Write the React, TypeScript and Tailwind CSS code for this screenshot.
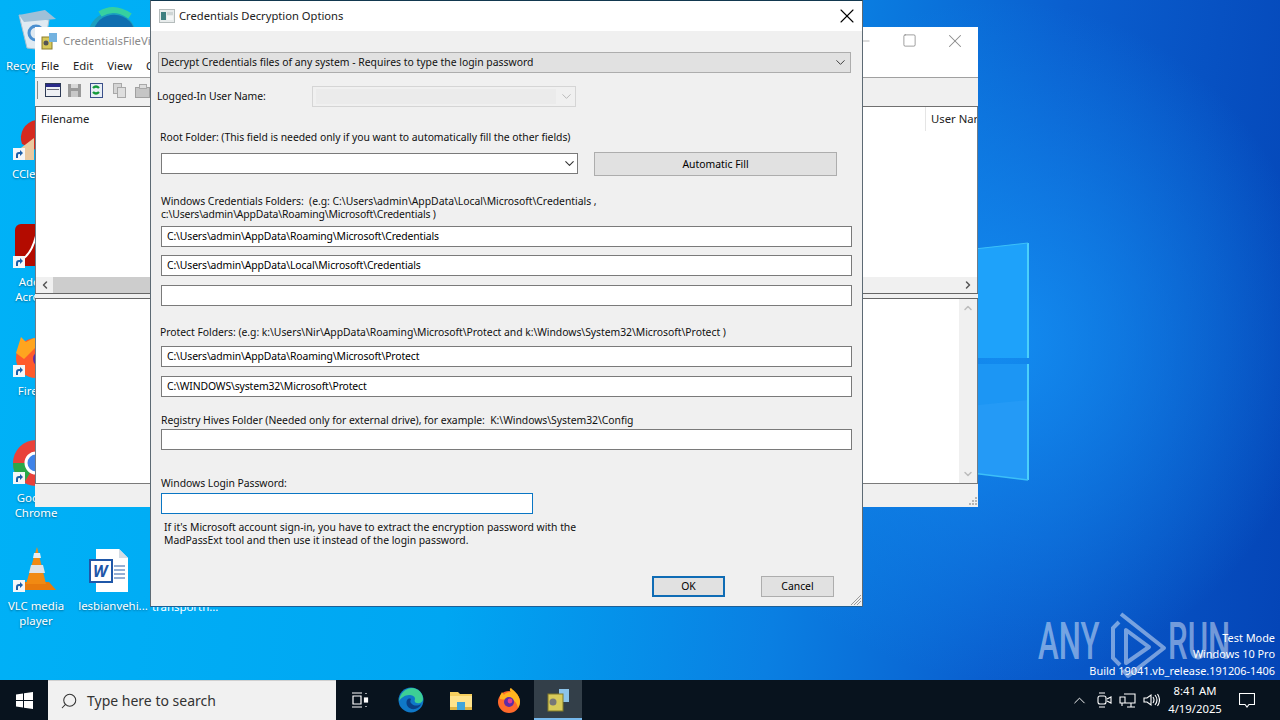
import { ChevronDown, ChevronLeft, ChevronRight, ChevronUp, X, Minus, Square, Search } from "lucide-react";

function TextBox({ value, className = "" }: { value?: string; className?: string }) {
  return (
    <div className={`ml-[10px] flex h-[21px] w-[691px] shrink-0 items-center border border-[#7a7a7a] bg-white pl-[5px] tracking-[-0.13px] text-black ${className}`}>
      {value}
    </div>
  );
}

function Label({ text, className = "" }: { text: string; className?: string }) {
  return <div className={`h-[14px] whitespace-pre leading-[14px] tracking-[-0.04px] ${className}`}>{text}</div>;
}

function Dialog() {
  return (
    <div className="absolute left-[150px] top-0 h-[607px] w-[713px] border border-[#5d6a74] border-t-[#12384f] border-b-[#1d5f96] bg-[#f0f0f0] text-[10.4px] text-[#111]">
      <div className="flex h-[30px] items-center bg-white pl-[8px] pr-[3px]">
        <svg width="16" height="14" viewBox="0 0 16 14" className="mr-[4px]">
          <rect x="0.5" y="0.5" width="15" height="13" fill="#e8ecec" stroke="#b5bcbc" />
          <rect x="2" y="3" width="5" height="8" fill="#3d7f80" />
          <rect x="8" y="3" width="6" height="3" fill="#cfd6d6" />
          <rect x="8" y="7" width="6" height="4" fill="#f4f6f6" />
        </svg>
        <span className="text-[11.2px] text-[#222]">Credentials Decryption Options</span>
        <X size={24} strokeWidth={1.1} className="ml-auto text-black" />
      </div>
      <div className="flex flex-col">
        <div className="ml-[7px] mt-[21px] flex h-[21px] w-[693px] items-center justify-between border border-[#adadad] bg-[#e1e1e1] pl-[2px] pr-[2px]">
          <span>Decrypt Credentials files of any system - Requires to type the login password</span>
          <ChevronDown size={15} strokeWidth={1.5} className="text-[#333]" />
        </div>

        <div className="mt-[13px] flex h-[21px]">
          <div className="ml-[6px] flex w-[155px] items-center pt-[1px] tracking-[-0.08px]">Logged-In User Name:</div>
          <div className="flex w-[264px] items-center justify-end border border-[#d5d5d5] bg-[#f0f0f0] pr-[1px]">
            <div className="mr-[3px] h-[15px] w-[240px] bg-[#ebebeb]" />
            <ChevronDown size={15} strokeWidth={1.5} className="text-[#b5b5b5]" />
          </div>
        </div>

        <Label className="ml-[9px] mt-[23px]" text="Root Folder: (This field is needed only if you want to automatically fill the other fields)" />

        <div className="mt-[8px] flex items-start">
          <div className="ml-[10px] mt-[1px] flex h-[21px] w-[417px] items-center justify-end border border-[#7a7a7a] bg-white">
            <ChevronDown size={15} strokeWidth={1.7} className="text-[#333]" />
          </div>
          <div className="ml-[16px] flex h-[24px] w-[243px] items-center justify-center border border-[#adadad] bg-[#e1e1e1] pt-[1px] text-black">
            Automatic Fill
          </div>
        </div>

        <div className="ml-[10px] mt-[19px] whitespace-pre leading-[13px] tracking-[-0.03px]">
          {"Windows Credentials Folders:  (e.g: C:\\Users\\admin\\AppData\\Local\\Microsoft\\Credentials ,\n"}
          <span className="tracking-[-0.15px]">{"c:\\Users\\admin\\AppData\\Roaming\\Microsoft\\Credentials )"}</span>
        </div>
        <TextBox className="mt-[5px]" value="C:\Users\admin\AppData\Roaming\Microsoft\Credentials" />
        <TextBox className="mt-[8px]" value="C:\Users\admin\AppData\Local\Microsoft\Credentials" />
        <TextBox className="mt-[9px]" />

        <Label className="ml-[9px] mt-[19px]" text="Protect Folders: (e.g: k:\Users\Nir\AppData\Roaming\Microsoft\Protect and k:\Windows\System32\Microsoft\Protect )" />
        <TextBox className="mt-[7px]" value="C:\Users\admin\AppData\Roaming\Microsoft\Protect" />
        <TextBox className="mt-[9px]" value="C:\WINDOWS\system32\Microsoft\Protect" />

        <Label className="ml-[10px] mt-[16px]" text="Registry Hives Folder (Needed only for external drive), for example:  K:\Windows\System32\Config" />
        <TextBox className="mt-[2px]" />

        <Label className="ml-[10px] mt-[26px]" text="Windows Login Password:" />
        <div className="ml-[10px] mt-[3px] h-[21px] w-[372px] border border-[#0a76c4] bg-white" />
        <div className="ml-[13px] mt-[7px] whitespace-pre leading-[13px] tracking-[-0.02px]">
          {"If it's Microsoft account sign-in, you have to extract the encryption password with the\nMadPassExt tool and then use it instead of the login password."}
        </div>

        <div className="mt-[29px] flex justify-end gap-[36px] pr-[28px]">
          <div className="flex h-[21px] w-[73px] items-center justify-center border-2 border-[#0f6cb5] bg-[#e1e1e1] text-black">OK</div>
          <div className="flex h-[21px] w-[73px] items-center justify-center border border-[#adadad] bg-[#e1e1e1] pt-[1px] text-black">Cancel</div>
        </div>
      </div>
      <svg width="12" height="12" viewBox="0 0 12 12" className="absolute bottom-0 right-0">
        <path d="M11 1 1 11M11 4 4 11M11 7 7 11" stroke="#9a9a9a" strokeWidth="1" fill="none" />
      </svg>
    </div>
  );
}

function ToolbarIcons() {
  return (
    <div className="flex h-[24px] items-center pl-[2px]">
      <div className="h-[18px] w-px bg-[#8a8a8a]" />
      <svg width="120" height="16" viewBox="0 0 120 16" className="ml-[6px]">
        <rect x="1.5" y="1.5" width="15" height="13" fill="#eef0f4" stroke="#2d3a55" />
        <rect x="2" y="2" width="14" height="3" fill="#2a2a8a" />
        <rect x="3" y="7" width="12" height="1" fill="#6a6a7a" />
        <rect x="24" y="2" width="13" height="13" fill="#9a9a9a" />
        <rect x="27" y="2" width="7" height="4" fill="#d8d8d8" />
        <rect x="27" y="9" width="7" height="6" fill="#c8c8c8" />
        <rect x="46.5" y="1.5" width="12" height="14" fill="#e8eef5" stroke="#3a4f8a" />
        <path d="M49 6q3-3 6 0M55 10q-3 3-6 0" stroke="#129a3a" strokeWidth="2.4" fill="none" />
        <rect x="69.5" y="1.5" width="8" height="10" fill="#d5d5d5" stroke="#a8a8a8" />
        <rect x="73.5" y="5.5" width="8" height="10" fill="#dedede" stroke="#a8a8a8" />
        <rect x="91.5" y="5.5" width="14" height="10" fill="#c5c5c5" stroke="#a0a0a0" />
        <rect x="95.5" y="2.5" width="7" height="4" fill="#dcdcdc" stroke="#a8a8a8" />
      </svg>
    </div>
  );
}

function BackWindow() {
  return (
    <div className="absolute left-[35px] top-[27px] flex h-[480px] w-[943px] flex-col bg-[#f0f0f0] text-[11.3px] text-[#222]">
      <div className="flex h-[28px] items-center bg-white pl-[5px]">
        <svg width="18" height="18" viewBox="0 0 18 18" className="mr-[5px]">
          <rect x="2" y="5" width="10" height="12" fill="#d8c95a" stroke="#8b7f2c" />
          <circle cx="6" cy="11" r="2.5" fill="#555" />
          <rect x="9" y="1" width="8" height="9" fill="#74b3e0" />
        </svg>
        <span className="text-[#8a8a8a]">CredentialsFileView</span>
        <Minus size={14} strokeWidth={1} className="absolute left-[823px] top-[7px] text-[#888]" />
        <Square size={15} strokeWidth={1} className="absolute left-[867px] top-[6px] text-[#666]" />
        <X size={22} strokeWidth={1.1} className="absolute left-[909px] top-[3px] text-[#8a8a8a]" />
      </div>
      <div className="flex h-[22px] items-center gap-[14px] bg-white pl-[6px]">
        <span>File</span>
        <span>Edit</span>
        <span>View</span>
        <span>Options</span>
        <span>Help</span>
      </div>
      <div className="h-[30px] border-y border-y-[#a0a0a0] border-b-[#707070] bg-[#f0f0f0]">
        <ToolbarIcons />
      </div>
      <div className="flex h-[170px] overflow-hidden border-x border-x-[#6f7c88] bg-white">
        <div className="flex h-[24px] w-full items-center justify-between pl-[5px]">
          <span>Filename</span>
          <div className="flex h-full w-[52px] items-center overflow-hidden whitespace-nowrap border-l border-l-[#e5e5e5] pl-[5px]">User Nar</div>
        </div>
      </div>
      <div className="flex h-[16px] items-center border-x border-x-[#6f7c88] bg-[#f0f0f0]">
        <ChevronLeft size={12} strokeWidth={3} className="ml-[3px] text-[#555]" />
        <div className="ml-[2px] h-full w-[750px] bg-[#cdcdcd]" />
        <ChevronRight size={12} strokeWidth={3} className="ml-auto mr-[3px] text-[#555]" />
      </div>
      <div className="h-[6px] border-y border-y-[#666] bg-[#f0f0f0]" />
      <div className="flex h-[184px] justify-end border-x border-x-[#6f7c88] bg-white">
        <div className="flex w-[18px] flex-col items-center justify-between bg-[#f0f0f0] py-[3px]">
          <ChevronUp size={12} strokeWidth={3} className="text-[#bdbdbd]" />
          <ChevronDown size={12} strokeWidth={3} className="text-[#bdbdbd]" />
        </div>
      </div>
      <div className="relative flex-1 border-t border-t-[#7a7a7a] bg-[#f0f0f0]">
        <svg width="9" height="9" viewBox="0 0 9 9" className="absolute bottom-[2px] right-[1px]">
          <path d="M7 1h2v2H7zM4 4h2v2H4zM7 4h2v2H7zM1 7h2v2H1zM4 7h2v2H4zM7 7h2v2H7z" fill="#b5b5b5" />
        </svg>
      </div>
    </div>
  );
}

function ShortcutArrow() {
  return (
    <svg width="12" height="12" viewBox="0 0 12 12" className="absolute bottom-0 left-0">
      <rect width="12" height="12" fill="#f4f6f8" />
      <path d="M3 10V7q0-3 3-3h1V2l3 3-3 3V6H6q-1 0-1 1v3z" fill="#1d5fa8" />
    </svg>
  );
}

function DesktopIcon({ left, top, lines, art, shortcut = false }: { left: number; top: number; lines: string[]; art: React.ReactNode; shortcut?: boolean }) {
  return (
    <div className="absolute flex w-[76px] flex-col items-center text-center text-[11.4px] leading-[15px] text-white" style={{ left, top }}>
      <div className="relative h-[48px] w-[48px]">
        {art}
        {shortcut && <div className="absolute bottom-[2px] left-[1px] h-[12px] w-[12px]"><ShortcutArrow /></div>}
      </div>
      <div className="mt-[4px] whitespace-nowrap [text-shadow:0_1px_2px_#0006]">
        {lines.map((l) => (
          <div key={l}>{l}</div>
        ))}
      </div>
    </div>
  );
}

function Wallpaper() {
  return (
    <svg width="180" height="260" viewBox="0 0 180 260" className="absolute left-[850px] top-[232px]">
      <path d="M0 31 178 11V126H0Z" fill="#1ea2fa" />
      <path d="M0 132H178V248L0 226Z" fill="#1c96f4" />
      <path d="M0 186 178 168V248L0 226Z" fill="#2a9cf6" fillOpacity="0.6" />
      <path d="M178 11V126" stroke="#4bd0fa" strokeWidth="2" />
      <path d="M178 132V248" stroke="#4bd0fa" strokeWidth="2" />
      <path d="M0 31 178 11" stroke="#3cc0f8" strokeWidth="1" />
      <path d="M0 226 178 248" stroke="#3cc0f8" strokeWidth="1.5" />
    </svg>
  );
}

function Watermark() {
  return (
    <div className="absolute left-0 top-0 h-[680px] w-[1280px] overflow-hidden text-white/45">
      <span className="absolute left-[1038px] top-[612px] origin-left scale-x-[0.6] font-['Roboto',sans-serif] text-[52px] font-medium leading-[60px]">ANY</span>
      <span className="absolute left-[1168px] top-[612px] origin-left scale-x-[0.6] font-['Roboto',sans-serif] text-[52px] font-medium leading-[60px]">RUN</span>
      <svg width="62" height="72" viewBox="0 0 62 72" className="absolute left-[1106px] top-[608px]">
        <path d="M15 6 58 40 22 68 17 62" fill="none" stroke="currentColor" strokeWidth="4" strokeLinejoin="round" />
        <path d="M20 22V55L43 39Z" fill="none" stroke="currentColor" strokeWidth="4" strokeLinejoin="round" />
        <path d="M13 14 7 20V50L14 57" fill="none" stroke="currentColor" strokeWidth="4" />
      </svg>
      <div className="absolute right-[5px] top-[630px] text-right text-[10.9px] leading-[16px] text-white">
        <div>Test Mode</div>
        <div>Windows 10 Pro</div>
        <div className="mt-[1px]">Build 19041.vb_release.191206-1406</div>
      </div>
    </div>
  );
}

function Taskbar() {
  return (
    <div className="absolute bottom-0 left-0 flex h-[40px] w-[1280px] items-center bg-[#08131e] text-white">
      <div className="flex h-full w-[48px] items-center justify-center">
        <svg width="17" height="17" viewBox="0 0 17 17">
          <path d="M0 2.4 7 1.4V8H0ZM8 1.3 17 0V8H8ZM0 9H7V15.6L0 14.6ZM8 9H17V17L8 15.7Z" fill="#fff" />
        </svg>
      </div>
      <div className="flex h-full w-[288px] items-center border-t border-t-[#d0d0d0] bg-[#f1f1f1] pl-[12px] text-[14px] text-[#333]">
        <Search size={18} strokeWidth={1.4} className="-scale-x-100 text-[#333]" />
        <span className="ml-[9px]">Type here to search</span>
      </div>
      <div className="ml-[13px] flex w-[22px] justify-center">
        <svg width="18" height="16" viewBox="0 0 18 16" fill="none" stroke="#fff" strokeWidth="1.2">
          <path d="M1 1h10M1 15h10M2 4h8v8H2zM15 1v1M15 14v1" />
          <rect x="13.5" y="6" width="3" height="4" fill="#fff" />
        </svg>
      </div>
      <svg width="26" height="26" viewBox="0 0 26 26" className="ml-[27px]">
        <circle cx="13" cy="13" r="12.5" fill="#0f78c8" />
        <path d="M1 14C2 6 8 1 14 1c6 0 11 5 11 11 0 3-3 5-6 4-2 0-3-2-2-4 0-3-3-4-6-4-4 0-8 3-10 6Z" fill="#3dcf95" />
        <path d="M9 13c-2 5 2 10 8 9 3-1 5-2 6-5-3 2-7 2-9 0-2-1-2-3-1-5-2-1-3 0-4 1Z" fill="#0a3f86" />
      </svg>
      <svg width="24" height="22" viewBox="0 0 24 22" className="ml-[25px]">
        <path d="M1 3h8l2 2h12v16H1Z" fill="#f6cf5e" />
        <path d="M1 7h22v14H1Z" fill="#ffe38c" />
        <rect x="1" y="18" width="22" height="3" fill="#e0b443" />
        <rect x="8" y="13" width="8" height="8" fill="#3fa5dc" />
      </svg>
      <svg width="24" height="25" viewBox="0 0 24 25" className="ml-[24px]">
        <circle cx="12" cy="14" r="11" fill="#ff6a2b" />
        <path d="M3 8 5 4l2 3c1-2 4-3 7-3-1-1-2-3 0-4 3 3 8 6 9 13 0 3-1 5-2 7-1-6-5-9-9-9-3 0-6 1-9 0Z" fill="#ffb41f" />
        <circle cx="12" cy="14" r="5" fill="#5f2da6" />
        <circle cx="13" cy="13" r="2.4" fill="#e73b8c" />
      </svg>
      <div className="relative ml-[13px] flex h-full w-[48px] items-center justify-center bg-[#333f49]">
        <svg width="24" height="24" viewBox="0 0 24 24">
          <rect x="13" y="1" width="10" height="13" fill="#8cc4ea" />
          <rect x="2" y="6" width="15" height="17" fill="#d8cb5a" stroke="#827a2a" />
          <circle cx="7" cy="14" r="3.5" fill="#777" />
        </svg>
        <div className="absolute bottom-0 h-[2px] w-full bg-[#76b9ed]" />
      </div>
      <div className="ml-auto flex h-full items-center">
        <ChevronUp size={19} strokeWidth={1.2} className="mr-[7px]" />
        <svg width="16" height="18" viewBox="0 0 16 18" fill="none" stroke="#fff" strokeWidth="1.1" className="mr-[7px]">
          <rect x="2" y="5" width="8" height="8" rx="2" />
          <path d="m11 8 4-2v6l-4-2M3 2h6M3 16h6" />
        </svg>
        <svg width="17" height="16" viewBox="0 0 17 16" fill="none" stroke="#fff" strokeWidth="1.1" className="mr-[7px]">
          <path d="M5 2h11v9H6M8 15h8M12 11v4M1 5h5v6H1zM3 11v3" />
        </svg>
        <svg width="17" height="16" viewBox="0 0 17 16" fill="none" stroke="#fff" strokeWidth="1.1" className="mr-[7px]">
          <path d="M1 6h3l4-3v10L4 10H1zM10 5q2 3 0 6M12 3q4 5 0 10M14.5 2q4 6 0 12" />
        </svg>
        <div className="w-[56px] text-center text-[11.3px] leading-[18px]">
          <div>8:41 AM</div>
          <div>4/19/2025</div>
        </div>
        <svg width="16" height="16" viewBox="0 0 16 16" fill="none" stroke="#fff" strokeWidth="1.1" className="ml-[16px] mr-[25px]">
          <path d="M.5 1.5h15v11H10L8 15l-2-2.5H.5z" />
        </svg>
      </div>
    </div>
  );
}

export default function App() {
  return (
    <div className="relative h-[720px] w-[1280px] overflow-hidden bg-[radial-gradient(ellipse_320px_340px_at_1000px_340px,#138cf0,transparent),linear-gradient(97deg,#00b2f7_0%,#00a6f2_38%,#0a7fe2_62%,#0a5fcf_78%,#0444b6_100%)] font-['Noto_Sans',sans-serif]">
      <Wallpaper />

      <DesktopIcon
        left={-2}
        top={6}
        lines={["Recycle Bin"]}
        art={
          <svg width="48" height="48" viewBox="0 0 48 48">
            <path d="M7 9 37 14 32 44 15 42Z" fill="#dfeaf2" stroke="#a8c0d0" />
            <path d="M7 9 33 4 44 13 12 16Z" fill="#9fc0d8" />
            <circle cx="24" cy="27" r="7" fill="none" stroke="#4a8fd0" strokeWidth="3" />
          </svg>
        }
      />
      <svg width="52" height="30" viewBox="0 0 52 30" className="absolute left-[86px] top-[6px]">
        <path d="M2 30a24 24 0 0 1 48 0Z" fill="#1a9fc0" />
        <path d="M8 30a20 18 0 0 1 40-6" fill="#0f6eb0" />
        <path d="M14 8q14-9 30 2" stroke="#36d0a0" strokeWidth="6" fill="none" />
      </svg>
      <DesktopIcon
        left={-2}
        top={114}
        shortcut
        lines={["CCleaner"]}
        art={
          <svg width="48" height="48" viewBox="0 0 48 48">
            <path d="M10 30A18 18 0 0 1 24 6V36Z" fill="#d52a20" />
            <path d="M1 40 22 24V46H4Z" fill="#eac9a0" />
          </svg>
        }
      />
      <DesktopIcon
        left={-2}
        top={222}
        shortcut
        lines={["Adobe", "Acrobat"]}
        art={
          <svg width="48" height="48" viewBox="0 0 48 48">
            <rect x="3" y="2" width="34" height="42" rx="6" fill="#b30b00" />
            <path d="M12 36q8-6 12-22" stroke="#fff" strokeWidth="2" fill="none" />
          </svg>
        }
      />
      <DesktopIcon
        left={-2}
        top={331}
        shortcut
        lines={["Firefox"]}
        art={
          <svg width="48" height="48" viewBox="0 0 48 48">
            <circle cx="24" cy="27" r="20" fill="#ff5a2b" />
            <path d="M4 22 9 6l5 5 8-4 8 3-8 8-10 10Z" fill="#ffa51f" />
            <circle cx="30" cy="28" r="9" fill="#5f2da6" />
          </svg>
        }
      />
      <DesktopIcon
        left={-2}
        top={438}
        shortcut
        lines={["Google", "Chrome"]}
        art={
          <svg width="48" height="48" viewBox="0 0 48 48">
            <circle cx="24" cy="25" r="23" fill="#e8413a" />
            <path d="M1 25a23 23 0 0 0 11 20l12-20Z" fill="#2aa84a" />
            <circle cx="24" cy="25" r="10" fill="#3f83e8" stroke="#fff" strokeWidth="3" />
          </svg>
        }
      />
      <DesktopIcon
        left={-2}
        top={546}
        shortcut
        lines={["VLC media", "player"]}
        art={
          <svg width="48" height="48" viewBox="0 0 48 48">
            <path d="M7 44 11 36 37 36 44 44Z" fill="#e87a0c" />
            <path d="M25 1 34 38H14Z" fill="#f18a12" />
            <path d="M19 19h12l2 8H17Z" fill="#dfe3e6" />
            <path d="M22 7h6l1 5h-8Z" fill="#e9ecef" />
          </svg>
        }
      />
      <DesktopIcon
        left={75}
        top={546}
        lines={["lesbianvehi..."]}
        art={
          <svg width="48" height="48" viewBox="0 0 48 48">
            <path d="M7 3H30L39 12V46H7Z" fill="#fff" />
            <path d="M30 3V12H39Z" fill="#d5dde5" />
            <rect x="1" y="14" width="22" height="22" fill="#fff" stroke="#1f57a8" strokeWidth="2" />
            <text x="4" y="31" fontSize="16" fontWeight="700" fontStyle="italic" fill="#1f57a8">W</text>
            <path d="M25 20h11M25 24h11M25 28h11M25 32h11" stroke="#2a5ea8" />
          </svg>
        }
      />
      <div className="absolute left-[152px] top-[599px] whitespace-nowrap text-[11.4px] leading-[15px] text-white">transporth...</div>

      <Watermark />
      <BackWindow />
      <Dialog />
      <Taskbar />
    </div>
  );
}
